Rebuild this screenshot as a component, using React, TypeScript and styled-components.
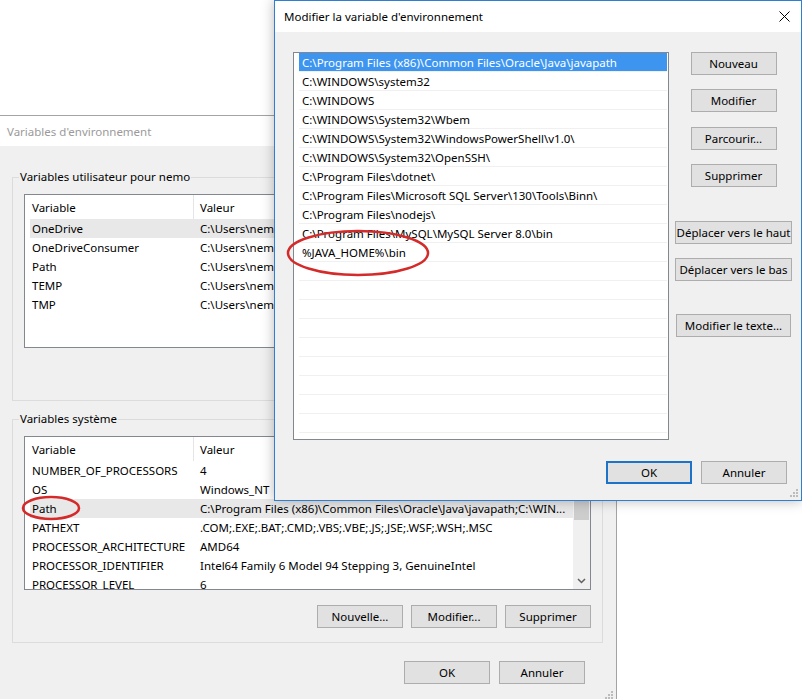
import React from "react";
import styled, { createGlobalStyle } from "styled-components";

const GlobalStyle = createGlobalStyle`
  html, body { margin: 0; padding: 0; background: #fff; }
  body {
    font-family: "Noto Sans", "Segoe UI", sans-serif;
    font-size: 11.5px;
    color: #000;
  }
  * { box-sizing: border-box; }
`;

const Desktop = styled.div`
  position: relative;
  width: 802px;
  height: 699px;
  overflow: hidden;
  background: #fff;
`;

const Win = styled.section<{ $x: number; $y: number; $w: number; $h: number; $active?: boolean }>`
  position: absolute;
  left: ${(p) => p.$x}px;
  top: ${(p) => p.$y}px;
  width: ${(p) => p.$w}px;
  height: ${(p) => p.$h}px;
  display: flex;
  flex-direction: column;
  background: #f0f0f0;
  border: 1px solid ${(p) => (p.$active ? "#2e7fd1" : "#a3a3a3")};
  box-shadow: ${(p) => (p.$active ? "0 0 12px rgba(0,0,0,0.28)" : "none")};
`;

const TitleBar = styled.header<{ $h: number; $pl: number; $inactive?: boolean }>`
  flex: none;
  height: ${(p) => p.$h}px;
  display: flex;
  align-items: center;
  justify-content: space-between;
  background: #fff;
  padding: 0 11px 0 ${(p) => p.$pl}px;
  color: ${(p) => (p.$inactive ? "#9a9a9a" : "#000")};
  white-space: nowrap;
`;

const Button = styled.button<{ $w?: number; $mt?: number; $default?: boolean }>`
  flex: none;
  width: ${(p) => p.$w ?? 86}px;
  height: 23px;
  margin: ${(p) => p.$mt ?? 0}px 0 0;
  padding: 0;
  font: inherit;
  color: #000;
  background: #e1e1e1;
  border: ${(p) => (p.$default ? "2px solid #1e72c8" : "1px solid #adadad")};
  white-space: nowrap;
`;

/* ---------- edit window ---------- */

const EditBody = styled.div`
  flex: 1;
  display: flex;
  flex-direction: column;
  padding: 20px 8px 16px 18px;
`;

const EditMain = styled.div`
  display: flex;
  gap: 6px;
`;

const PathList = styled.div`
  flex: none;
  width: 376px;
  height: 388px;
  padding: 0 1px 0 5px;
  background: #fff;
  border: 1px solid #828790;
  overflow: hidden;
`;

const PathRow = styled.div<{ $selected?: boolean }>`
  height: 19px;
  line-height: 19px;
  padding-left: 3px;
  border-bottom: 1px solid #f0f0f0;
  white-space: nowrap;
  background: ${(p) => (p.$selected ? "#3d95ef" : "transparent")};
  color: ${(p) => (p.$selected ? "#fff" : "#000")};
`;

const SideButtons = styled.div`
  flex: none;
  width: 117px;
  display: flex;
  flex-direction: column;
  align-items: center;
`;

const EditFooter = styled.div`
  display: flex;
  justify-content: flex-end;
  gap: 9px;
  margin-top: 21px;
  padding-right: 6px;
`;

/* ---------- back window ---------- */

const BackBody = styled.div`
  flex: 1;
  display: flex;
  flex-direction: column;
  padding: 23px 13px 0 13px;
`;

const Group = styled.fieldset<{ $mt?: number }>`
  margin: ${(p) => p.$mt ?? 0}px 0 0;
  min-width: 0;
  padding: 9px 11px 14px 6px;
  border: 1px solid #dcdcdc;
`;

const Legend = styled.legend`
  padding: 0 1px;
  line-height: 16px;
  font-size: 11.5px;
`;

const ListView = styled.div`
  margin-left: 5px;
  height: 154px;
  display: flex;
  background: #fff;
  border: 1px solid #828790;
  overflow: hidden;
`;

const ListContent = styled.div`
  flex: 1;
  min-width: 0;
  padding-left: 5px;
  overflow: hidden;
`;

const HeaderRow = styled.div`
  display: grid;
  grid-template-columns: 164px 1fr;
  height: 24px;
`;

const HeaderCell = styled.div<{ $first?: boolean }>`
  display: flex;
  align-items: center;
  padding-left: ${(p) => (p.$first ? 2 : 6)}px;
  border-right: ${(p) => (p.$first ? "1px solid #e5e5e5" : "none")};
`;

const DataRow = styled.div<{ $hl?: boolean }>`
  display: grid;
  grid-template-columns: 164px 1fr;
  height: 19px;
  line-height: 19px;
  background: ${(p) => (p.$hl ? "#e8e8e8" : "transparent")};
`;

const Cell = styled.div<{ $first?: boolean }>`
  padding-left: ${(p) => (p.$first ? 2 : 6)}px;
  white-space: nowrap;
  overflow: hidden;
`;

const ScrollBar = styled.div`
  flex: none;
  width: 17px;
  display: flex;
  flex-direction: column;
  background: #f0f0f0;
`;

const ScrollArrow = styled.div`
  flex: none;
  height: 17px;
  display: flex;
  align-items: center;
  justify-content: center;
`;

const ScrollTrack = styled.div`
  flex: 1;
  padding: 0 1px;
`;

const Thumb = styled.div`
  height: 66px;
  background: #cdcdcd;
`;

const ButtonRow = styled.div`
  display: flex;
  justify-content: flex-end;
  gap: 8px;
  margin-top: 15px;
`;

const BackFooter = styled.div`
  display: flex;
  justify-content: flex-end;
  gap: 9px;
  margin-top: 18px;
  padding-right: 18px;
`;

/* ---------- overlays ---------- */

const GripIcon = styled.svg`
  position: absolute;
  right: 2px;
  bottom: 2px;
`;

const Annotations = styled.svg`
  position: absolute;
  left: 0;
  top: 0;
  pointer-events: none;
`;

/* ---------- data ---------- */

type Variable = { name: string; value: string; hl?: boolean };

const userVars: Variable[] = [
  { name: "OneDrive", value: "C:\\Users\\nemo\\OneDrive", hl: true },
  { name: "OneDriveConsumer", value: "C:\\Users\\nemo\\OneDrive" },
  { name: "Path", value: "C:\\Users\\nemo\\AppData\\Local\\Microsoft\\WindowsApps;" },
  { name: "TEMP", value: "C:\\Users\\nemo\\AppData\\Local\\Temp" },
  { name: "TMP", value: "C:\\Users\\nemo\\AppData\\Local\\Temp" },
];

const sysVars: Variable[] = [
  { name: "NUMBER_OF_PROCESSORS", value: "4" },
  { name: "OS", value: "Windows_NT" },
  {
    name: "Path",
    value: "C:\\Program Files (x86)\\Common Files\\Oracle\\Java\\javapath;C:\\WIN...",
    hl: true,
  },
  { name: "PATHEXT", value: ".COM;.EXE;.BAT;.CMD;.VBS;.VBE;.JS;.JSE;.WSF;.WSH;.MSC" },
  { name: "PROCESSOR_ARCHITECTURE", value: "AMD64" },
  { name: "PROCESSOR_IDENTIFIER", value: "Intel64 Family 6 Model 94 Stepping 3, GenuineIntel" },
  { name: "PROCESSOR_LEVEL", value: "6" },
];

const paths = [
  "C:\\Program Files (x86)\\Common Files\\Oracle\\Java\\javapath",
  "C:\\WINDOWS\\system32",
  "C:\\WINDOWS",
  "C:\\WINDOWS\\System32\\Wbem",
  "C:\\WINDOWS\\System32\\WindowsPowerShell\\v1.0\\",
  "C:\\WINDOWS\\System32\\OpenSSH\\",
  "C:\\Program Files\\dotnet\\",
  "C:\\Program Files\\Microsoft SQL Server\\130\\Tools\\Binn\\",
  "C:\\Program Files\\nodejs\\",
  "C:\\Program Files\\MySQL\\MySQL Server 8.0\\bin",
  "%JAVA_HOME%\\bin",
];

const Grip = () => (
  <GripIcon width="9" height="9" viewBox="0 0 9 9">
    {[
      [6, 0],
      [3, 3],
      [6, 3],
      [0, 6],
      [3, 6],
      [6, 6],
    ].map(([x, y]) => (
      <rect key={`${x}-${y}`} x={x} y={y} width="2" height="2" fill="#bcbcbc" />
    ))}
  </GripIcon>
);

const Chevron = ({ up }: { up?: boolean }) => (
  <svg width="9" height="6" viewBox="0 0 9 6">
    <path
      d={up ? "M1 5 L4.5 1.5 L8 5" : "M1 1 L4.5 4.5 L8 1"}
      fill="none"
      stroke="#606060"
      strokeWidth="1.5"
    />
  </svg>
);

const VarList = ({ rows, scroll }: { rows: Variable[]; scroll?: boolean }) => (
  <ListView>
    <ListContent>
      <HeaderRow>
        <HeaderCell $first>Variable</HeaderCell>
        <HeaderCell>Valeur</HeaderCell>
      </HeaderRow>
      {rows.map((r) => (
        <DataRow key={r.name} $hl={r.hl}>
          <Cell $first>{r.name}</Cell>
          <Cell>{r.value}</Cell>
        </DataRow>
      ))}
    </ListContent>
    {scroll && (
      <ScrollBar>
        <ScrollArrow>
          <Chevron up />
        </ScrollArrow>
        <ScrollTrack>
          <Thumb />
        </ScrollTrack>
        <ScrollArrow>
          <Chevron />
        </ScrollArrow>
      </ScrollBar>
    )}
  </ListView>
);

export default function App() {
  const emptyRows = Array.from({ length: 10 }, (_, i) => i);
  return (
    <>
      <GlobalStyle />
      <Desktop>
        <Win $x={-2} $y={115} $w={619} $h={588}>
          <TitleBar $h={30} $pl={8} $inactive>
            Variables d'environnement
          </TitleBar>
          <BackBody>
            <Group>
              <Legend>Variables utilisateur pour nemo</Legend>
              <VarList rows={userVars} />
              <ButtonRow>
                <Button>Nouvelle...</Button>
                <Button>Modifier...</Button>
                <Button>Supprimer</Button>
              </ButtonRow>
            </Group>
            <Group $mt={10}>
              <Legend>Variables système</Legend>
              <VarList rows={sysVars} scroll />
              <ButtonRow>
                <Button>Nouvelle...</Button>
                <Button>Modifier...</Button>
                <Button>Supprimer</Button>
              </ButtonRow>
            </Group>
            <BackFooter>
              <Button>OK</Button>
              <Button>Annuler</Button>
            </BackFooter>
          </BackBody>
          <Grip />
        </Win>

        <Win $x={274} $y={0} $w={528} $h={501} $active>
          <TitleBar $h={31} $pl={9}>
            Modifier la variable d'environnement
            <svg width="11" height="11" viewBox="0 0 11 11">
              <path d="M0.5 0.5 L10.5 10.5 M10.5 0.5 L0.5 10.5" stroke="#000" strokeWidth="1" />
            </svg>
          </TitleBar>
          <EditBody>
            <EditMain>
              <PathList>
                {paths.map((p, i) => (
                  <PathRow key={p} $selected={i === 0}>
                    {p}
                  </PathRow>
                ))}
                {emptyRows.map((i) => (
                  <PathRow key={`empty-${i}`} />
                ))}
              </PathList>
              <SideButtons>
                <Button>Nouveau</Button>
                <Button $mt={14}>Modifier</Button>
                <Button $mt={15}>Parcourir...</Button>
                <Button $mt={14}>Supprimer</Button>
                <Button $mt={34} $w={117}>
                  Déplacer vers le haut
                </Button>
                <Button $mt={14} $w={117}>
                  Déplacer vers le bas
                </Button>
                <Button $mt={33} $w={115}>
                  Modifier le texte...
                </Button>
              </SideButtons>
            </EditMain>
            <EditFooter>
              <Button $default>OK</Button>
              <Button>Annuler</Button>
            </EditFooter>
          </EditBody>
          <Grip />
        </Win>

        <Annotations width="802" height="699" viewBox="0 0 802 699">
          <ellipse cx="358" cy="253" rx="70" ry="22" fill="none" stroke="#d42a2a" strokeWidth="2.5" />
          <ellipse cx="51" cy="508" rx="28" ry="11" fill="none" stroke="#d42a2a" strokeWidth="2.5" />
        </Annotations>
      </Desktop>
    </>
  );
}
